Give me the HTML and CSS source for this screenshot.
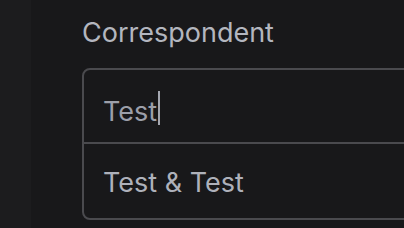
FILE: index.html
```html
<!DOCTYPE html>
<html lang="en">
<head>
  <meta charset="UTF-8">
  <meta name="viewport" content="width=device-width, initial-scale=1.0">
  <title>Correspondent</title>
  <link rel="stylesheet" href="styles.css">
</head>
<body>
  <div class="layout">
    <aside class="sidebar"></aside>

    <main class="content">
      <div class="field">
        <label class="field-label">Correspondent</label>
        <div class="combo">
          <!-- search input -->
          <div class="combo-input">
            <span class="combo-value">Test</span><span class="caret"></span>
          </div>
          <!-- results -->
          <div class="combo-option">Test &amp; Test</div>
        </div>
      </div>
    </main>
  </div>
</body>
</html>
```

FILE: styles.css
```css
* {
  margin: 0;
  padding: 0;
  box-sizing: border-box;
}

body {
  background: #18181a;
  font-family: 'Inter', 'Liberation Sans', sans-serif;
  overflow: hidden;
}

.layout {
  display: flex;
  height: 228px;
}

/* Sidebar */
.sidebar {
  width: 31px;
  flex-shrink: 0;
  background: #1c1c1e;
}

/* Content */
.content {
  flex: 1;
  padding: 16px 0 0 51px;
  min-width: 0;
  overflow: hidden;
}

.field-label {
  display: block;
  font-size: 27px;
  line-height: 34px;
  color: #b3b6bf;
  margin-bottom: 18px;
}

.combo {
  width: 400px;
  border: 2px solid #4a4a4e;
  border-radius: 8px;
}

.combo-input {
  height: 74px;
  display: flex;
  align-items: center;
  padding: 4px 0 0 19px;
  border-bottom: 2px solid #4a4a4e;
  font-size: 27px;
  color: #9c9fa9;
}

.combo-value {
  position: relative;
  top: 3px;
}

.caret {
  display: inline-block;
  width: 2px;
  height: 34px;
  margin-left: 1px;
  background: #a4a7b0;
}

.combo-option {
  height: 74px;
  display: flex;
  align-items: center;
  padding: 2px 0 0 19px;
  font-size: 27px;
  color: #aeb1ba;
}
```
